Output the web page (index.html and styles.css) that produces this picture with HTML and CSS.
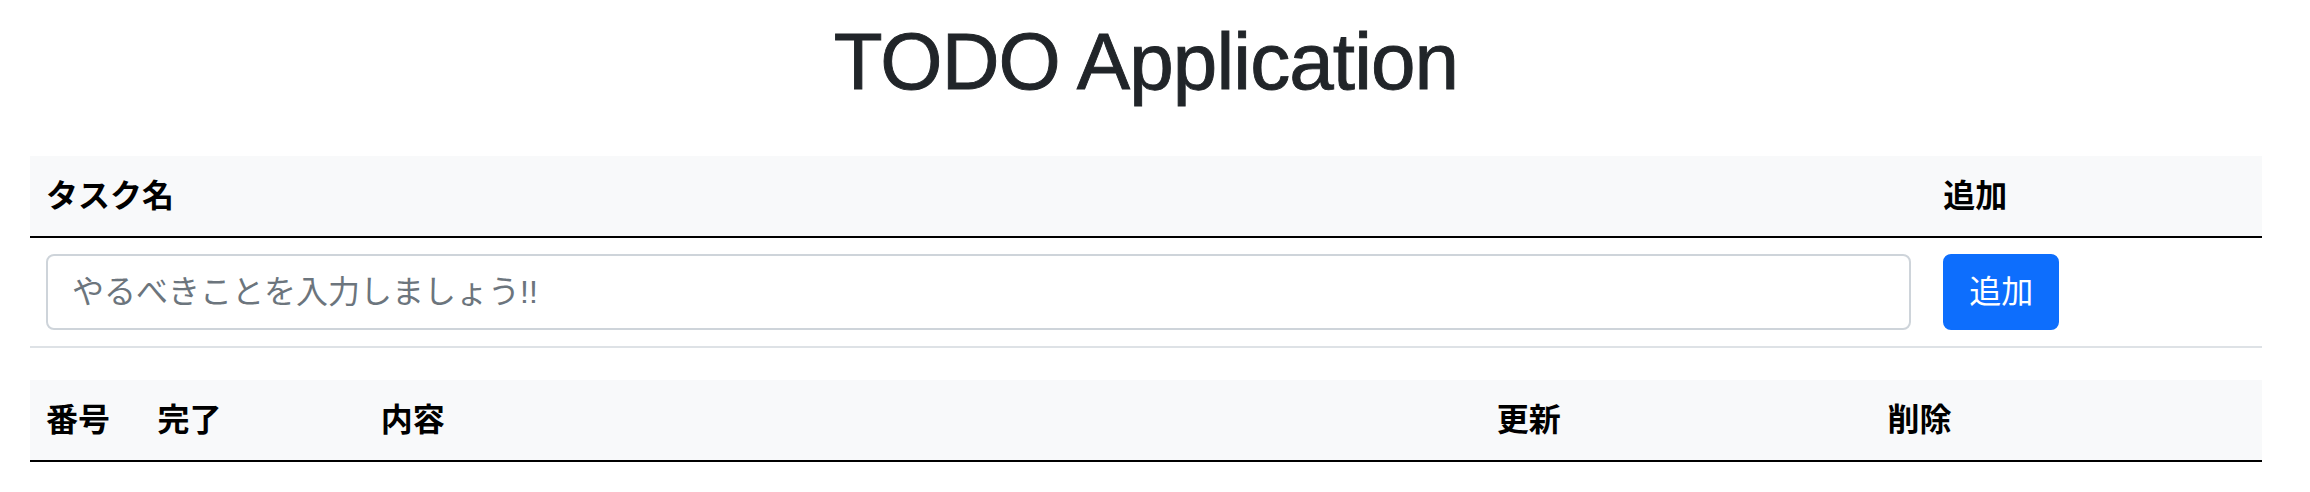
FILE: index.html
```html
<!DOCTYPE html>
<html lang="ja">
<head>
<meta charset="utf-8">
<title>TODO Application</title>
<link rel="stylesheet" href="styles.css">
</head>
<body>
<div class="page">
  <h1 class="title">TODO Application</h1>
  <table class="table">
    <colgroup>
      <col class="w-85">
      <col class="w-15">
    </colgroup>
    <thead>
      <tr>
        <th>タスク名</th>
        <th>追加</th>
      </tr>
    </thead>
    <tbody>
      <tr>
        <td><input class="form-control" type="text" placeholder="やるべきことを入力しましょう!!"></td>
        <td><button class="btn" type="button">追加</button></td>
      </tr>
    </tbody>
  </table>
  <table class="table">
    <colgroup>
      <col class="w-5">
      <col class="w-10">
      <col class="w-50">
      <col class="w-175">
      <col class="w-175">
    </colgroup>
    <thead>
      <tr>
        <th>番号</th>
        <th>完了</th>
        <th>内容</th>
        <th>更新</th>
        <th>削除</th>
      </tr>
    </thead>
  </table>
</div>
</body>
</html>
```

FILE: styles.css
```css
* { box-sizing: border-box; }

html, body {
  margin: 0;
  padding: 0;
  background: #fff;
}

body {
  font-family: "Liberation Sans", "Noto Sans CJK JP", sans-serif;
  font-size: 32px;
  line-height: 48px;
  color: #212529;
}

.page {
  padding: 14px 48px 0 30px;
}

.title {
  margin: 0 0 46px;
  font-size: 80px;
  line-height: 96px;
  font-weight: 400;
  letter-spacing: -0.9px;
  text-align: center;
  color: #212529;
  -webkit-text-stroke: 0.9px #212529;
}

.table {
  width: 100%;
  border-collapse: collapse;
  table-layout: fixed;
  margin-bottom: 32px;
}

.w-85 { width: 85%; }
.w-15 { width: 15%; }
.w-5 { width: 5%; }
.w-10 { width: 10%; }
.w-50 { width: 50%; }
.w-175 { width: 17.5%; }

.table th {
  background: #f8f9fa;
  color: #000;
  font-weight: 700;
  text-align: left;
  padding: 16px;
  line-height: 48px;
  border-bottom: 2px solid #000;
  white-space: nowrap;
}

.table td {
  padding: 16px;
  border-bottom: 2px solid #dee2e6;
  vertical-align: middle;
}

.form-control {
  display: block;
  width: 100%;
  height: 76px;
  padding: 12px 24px;
  font-family: "Liberation Sans", "Noto Sans CJK JP", sans-serif;
  font-size: 32px;
  line-height: 48px;
  color: #212529;
  background: #fff;
  border: 2px solid #ced4da;
  border-radius: 8px;
  outline: none;
}

.form-control::placeholder {
  color: #6c757d;
  opacity: 1;
}

.btn {
  display: inline-block;
  height: 76px;
  padding: 12px 24px;
  font-family: "Liberation Sans", "Noto Sans CJK JP", sans-serif;
  font-size: 32px;
  line-height: 48px;
  font-weight: 400;
  color: #fff;
  background: #0d6efd;
  border: 2px solid #0d6efd;
  border-radius: 8px;
}
```
